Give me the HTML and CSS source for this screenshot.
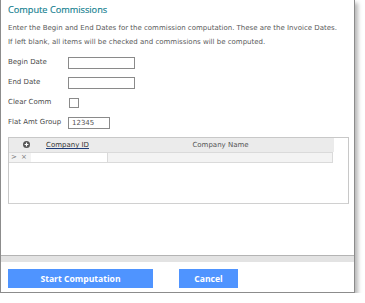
FILE: index.html
```html
<!DOCTYPE html>
<html>
<head>
<meta charset="utf-8">
<link rel="stylesheet" href="styles.css">
</head>
<body>
<div class="dialog">
  <div class="content">
    <div class="title">Compute Commissions</div>
    <div class="desc">Enter the Begin and End Dates for the commission computation. These are the Invoice Dates.<br>If left blank, all items will be checked and commissions will be computed.</div>
    <div class="form">
      <div class="row"><span class="label">Begin Date</span><span class="input wide"></span></div>
      <div class="row"><span class="label">End Date</span><span class="input wide"></span></div>
      <div class="row"><span class="label">Clear Comm</span><span class="check"></span></div>
      <div class="row"><span class="label">Flat Amt Group</span><span class="input narrow">12345</span></div>
    </div>
    <div class="grid">
      <div class="ghead">
        <span class="gicon"><svg width="7" height="7" viewBox="0 0 7 7"><circle cx="3.5" cy="3.5" r="3.5" fill="#555"/><path d="M3.5 1.6v3.8M1.6 3.5h3.8" stroke="#fff" stroke-width="1.2"/></svg></span>
        <span class="gcol id">Company ID</span>
        <span class="gcol name">Company Name</span>
      </div>
      <div class="grow">
        <span class="gmark">&gt;</span>
        <span class="gx">×</span>
        <span class="gcell id"></span>
        <span class="gcell name"></span>
      </div>
    </div>
  </div>
  <div class="footer">
    <div class="sep"></div>
    <div class="buttons">
      <button class="btn start">Start Computation</button>
      <button class="btn cancel">Cancel</button>
    </div>
  </div>
</div>
</body>
</html>
```
FILE: styles.css
```css
html, body {
  margin: 0;
  padding: 0;
  background: #fff;
}
.dialog {
  box-sizing: border-box;
  width: 355px;
  height: 293px;
  border: 1px solid #8c8c8c;
  border-top: none;
  box-shadow: 3px 3px 4px rgba(0,0,0,0.28);
  display: flex;
  flex-direction: column;
  font-family: "DejaVu Sans", Verdana, sans-serif;
  font-size: 7px;
  color: #555;
}
.content {
  padding: 0 0 0 7px;
}
.title {
  margin-top: 3px;
  font-family: "Open Sans", sans-serif;
  font-size: 9.2px;
  line-height: 14px;
  color: #13808f;
  -webkit-text-stroke: 0.15px #13808f;
}
.desc {
  margin-top: 4px;
  line-height: 14px;
  white-space: nowrap;
  color: #5a5a5a;
}
.form {
  margin-top: 4px;
}
.row {
  height: 20px;
  display: flex;
  align-items: center;
}
.label {
  width: 60px;
  color: #4a4a4a;
  position: relative;
  top: -1px;
}
.input {
  box-sizing: border-box;
  height: 12px;
  border: 1px solid #8a8a8a;
  background: #fff;
  font-size: 7px;
  line-height: 10px;
  padding-left: 3px;
  color: #555;
}
.input.wide { width: 67px; }
.input.narrow { width: 42px; }
.check {
  box-sizing: border-box;
  width: 10px;
  height: 10px;
  border: 1px solid #8a8a8a;
  margin-left: 1px;
}
.grid {
  box-sizing: border-box;
  margin-top: 4px;
  width: 341px;
  height: 67px;
  border: 1px solid #c8c8c8;
  border-bottom-color: #d0d0d0;
}
.ghead {
  display: flex;
  align-items: center;
  width: 325px;
  height: 14px;
  background: #ebebeb;
}
.gicon {
  width: 30px;
  display: flex;
  justify-content: flex-end;
  padding-right: 9px;
  box-sizing: border-box;
  position: relative;
  top: -1px;
}
.gcol.id {
  width: 68px;
  padding-left: 7px;
  box-sizing: border-box;
  color: #333;
  text-decoration: underline;
  text-decoration-color: #1d3b78;
}
.gcol.name {
  flex: 1;
  text-align: center;
  color: #555;
}
.grow {
  display: flex;
  align-items: stretch;
  box-sizing: border-box;
  width: 324px;
  height: 11px;
  background: #f3f3f3;
  border: 1px solid #dadada;
  border-left: none;
}
.gmark, .gx {
  width: 10px;
  text-align: center;
  line-height: 9px;
  color: #777;
  font-size: 7px;
}
.gx { margin-right: 2px; }
.gcell.id {
  width: 76px;
  background: #fff;
  border-right: 1px solid #dadada;
}
.gcell.name {
  flex: 1;
}
.footer {
  margin-top: auto;
}
.sep {
  height: 6px;
  background: #e3e3e3;
  border-top: 1px solid #b4b4b4;
}
.buttons {
  display: flex;
  gap: 26px;
  padding: 7px 0 4px 7px;
}
.btn {
  height: 19px;
  border: none;
  background: #4f94ff;
  color: #fff;
  font-family: "Open Sans", sans-serif;
  font-weight: bold;
  font-size: 8.6px;
  padding: 0;
  margin: 0;
}
.btn.start { width: 145px; }
.btn.cancel { width: 59px; }
```
